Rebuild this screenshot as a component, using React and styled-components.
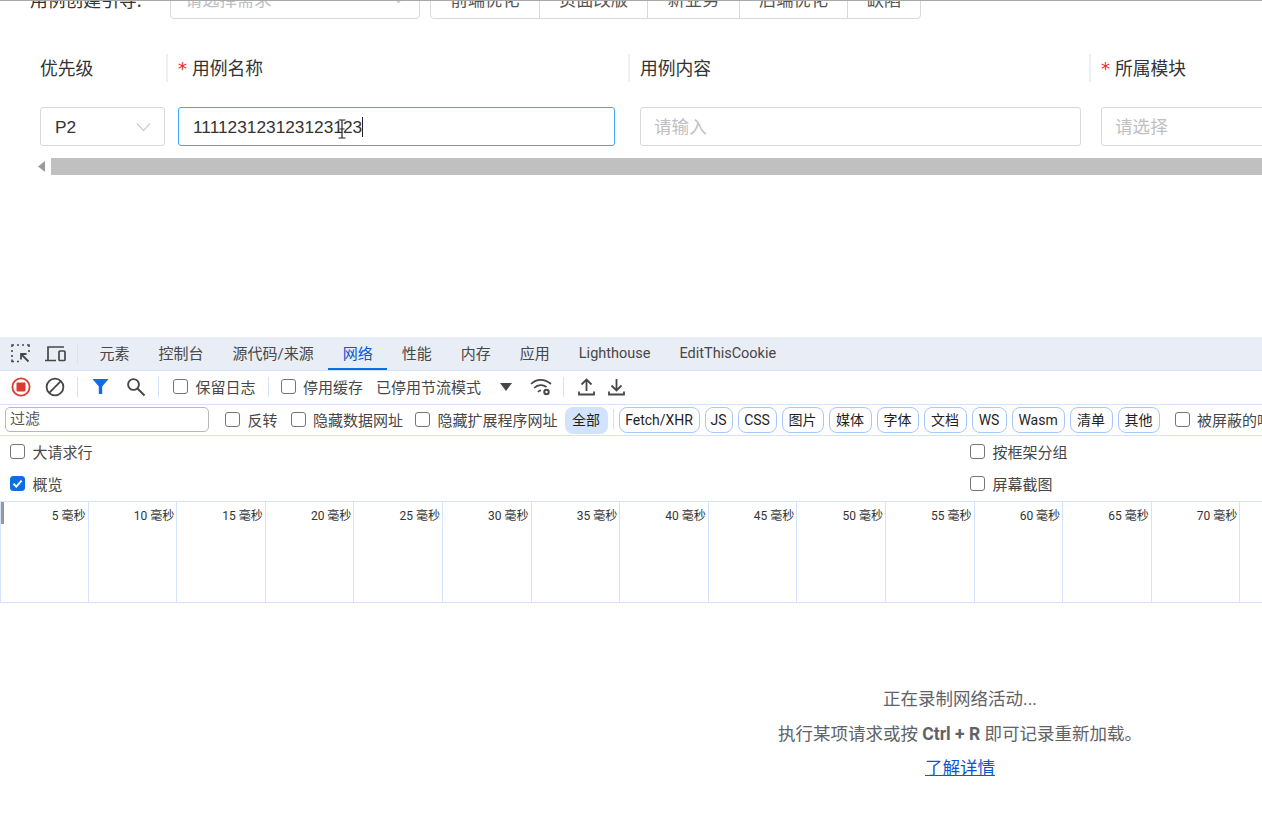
import React from "react";
import styled, { createGlobalStyle } from "styled-components";

const Global = createGlobalStyle`
  html, body { margin: 0; padding: 0; background: #fff; overflow: hidden; }
  body { font-family: Roboto, "Noto Sans CJK SC", sans-serif; white-space: nowrap; }
  * { box-sizing: border-box; }
`;

const Screen = styled.div`
  width: 1262px;
  height: 818px;
  overflow: hidden;
`;

/* ---------- page above the devtools ---------- */
const PageArea = styled.div`
  height: 337px;
  border-top: 1px solid #a9a9a9;
  overflow: hidden;
  font-family: "Noto Sans CJK SC", "Liberation Sans", sans-serif;
`;
const GuideRow = styled.div`
  display: flex;
  align-items: center;
  height: 40px;
  margin-top: -22px;
  padding-left: 30px;
  color: #333;
  font-size: 17.8px;
`;
const GuideLabel = styled.span`
  width: 140px;
`;
const GuideSelect = styled.div`
  width: 250px;
  height: 40px;
  border: 1px solid #d9d9d9;
  border-radius: 4px;
  padding-left: 14px;
  line-height: 38px;
  color: #bfbfbf;
  font-size: 17.3px;
  position: relative;
`;
const Segments = styled.div`
  display: flex;
  margin-left: 10px;
  height: 40px;
  border: 1px solid #d9d9d9;
  border-radius: 4px;
`;
const Segment = styled.div`
  width: ${(p) => p.$w}px;
  text-align: center;
  line-height: 38px;
  font-size: 17.3px;
  color: #555;
  & + & { border-left: 1px solid #d9d9d9; }
`;
const FormTable = styled.div`
  display: grid;
  grid-template-columns: 128px 462px 461px 400px;
  margin-top: 35px;
  padding-left: 40px;
  width: 1500px;
`;
const HeadCell = styled.div`
  height: 28px;
  line-height: 27px;
  font-size: 17.8px;
  color: #333;
  margin-left: ${(p) => (p.$first ? 0 : -2)}px;
  padding-left: ${(p) => (p.$first ? 0 : 10)}px;
  border-left: ${(p) => (p.$first ? "none" : "2px solid #efefef")};
`;
const Star = styled.span`
  color: #f5222d;
  margin-right: 5px;
  font-size: 18px;
  font-family: "DejaVu Sans", sans-serif;
`;
const BodyCell = styled.div`
  margin-top: 25px;
  padding-left: ${(p) => (p.$first ? 0 : 10)}px;
  padding-right: ${(p) => p.$right || 0}px;
`;
const Field = styled.div`
  position: relative;
  height: 39px;
  border: 1px solid ${(p) => (p.$focus ? "#40a9ff" : "#d9d9d9")};
  border-radius: 3px;
  padding-left: ${(p) => (p.$muted ? 13 : 14)}px;
  line-height: 39px;
  font-size: ${(p) => (p.$muted ? 17.6 : 17.3)}px;
  color: ${(p) => (p.$muted ? "#bfbfbf" : "#333")};
  font-family: "Liberation Sans", "Noto Sans CJK SC", sans-serif;
`;
const Caret = styled.span`
  display: inline-block;
  width: 1px;
  height: 20px;
  background: #222;
  vertical-align: -4px;
`;
const Chevron = styled.svg`
  position: absolute;
  right: 13px;
  top: 14px;
`;
const IBeam = styled.svg`
  position: absolute;
  left: 158px;
  top: 11px;
`;
const ScrollBar = styled.div`
  display: flex;
  align-items: center;
  margin-top: 12px;
  height: 17px;
  padding-left: 38px;
`;
const ScrollThumb = styled.div`
  flex: 1;
  height: 17px;
  margin-left: 6px;
  background: #c0c0c0;
`;

/* ---------- devtools ---------- */
const DevTools = styled.div`
  font-family: Roboto, "Noto Sans CJK SC", sans-serif;
  font-size: 15px;
  color: #474747;
`;
const TabBar = styled.div`
  display: flex;
  align-items: center;
  height: 34px;
  background: #e9edf5;
  border-bottom: 1px solid #d3e3fd;
  padding-left: 11px;
`;
const IconSlot = styled.span`
  display: inline-flex;
  align-items: center;
  justify-content: center;
  flex: none;
  width: ${(p) => p.$w}px;
  margin-left: ${(p) => p.$ml || 0}px;
  margin-right: ${(p) => p.$mr || 0}px;
`;
const VLine = styled.span`
  flex: none;
  width: 1px;
  height: 20px;
  background: #d3e3fd;
  margin-left: ${(p) => p.$ml || 0}px;
  margin-right: ${(p) => p.$mr || 0}px;
`;
const Tab = styled.div`
  position: relative;
  height: 33px;
  line-height: 34px;
  padding: 0 14.5px;
  font-size: ${(p) => (p.$latin ? 14.5 : 15)}px;
  color: ${(p) => (p.$active ? "#0b57d0" : "#474747")};
  ${(p) =>
    p.$active &&
    `&::after { content: ""; position: absolute; left: 0; right: 0; bottom: 0; height: 2px; background: #0b6fe0; }`}
`;
const ToolBar = styled.div`
  display: flex;
  align-items: center;
  height: 34px;
  border-bottom: 1px solid #d3e3fd;
  padding: 0 0 2px 10px;
`;
const Box = styled.span`
  flex: none;
  display: inline-flex;
  align-items: center;
  justify-content: center;
  width: 15px;
  height: 15px;
  border: 1.3px solid ${(p) => (p.$on ? "#0b6fe0" : "#757575")};
  background: ${(p) => (p.$on ? "#0b6fe0" : "#fff")};
  border-radius: 3px;
`;
const Check = styled.label`
  display: inline-flex;
  align-items: center;
  gap: 7.5px;
  margin-left: ${(p) => p.$ml || 0}px;
  color: #474747;
`;
const FilterBar = styled.div`
  display: flex;
  align-items: center;
  height: 31px;
  border-bottom: 1px solid #d3e3fd;
  padding: 0 0 2px 5px;
`;
const FilterInput = styled.div`
  flex: none;
  width: 204px;
  height: 25px;
  border: 1px solid #b8b8b8;
  border-radius: 5px;
  padding-left: 4px;
  line-height: 23px;
  color: #555;
`;
const AllChip = styled.div`
  flex: none;
  width: 43px;
  height: 27px;
  margin: 2px 0 0 7px;
  border-radius: 8px;
  background: #d3e3fd;
  color: #1f1f1f;
  text-align: center;
  line-height: 27px;
  font-size: 14px;
`;
const Chip = styled.div`
  flex: none;
  width: ${(p) => p.$w}px;
  height: 26px;
  margin: 2px 0 0 5px;
  border: 1px solid #a8c7fa;
  border-radius: 8px;
  color: #1f1f1f;
  text-align: center;
  line-height: 24px;
  font-size: 14px;
`;
const Options = styled.div`
  display: grid;
  grid-template-columns: 960px 1fr;
  grid-auto-rows: 32.5px;
  height: 66px;
  margin-top: -1px;
  padding-left: 10px;
  align-items: center;
  align-content: start;
`;
const Timeline = styled.div`
  display: flex;
  position: relative;
  height: 102px;
  border-top: 1px solid #d3e3fd;
  border-bottom: 1px solid #d3e3fd;
  border-left: 1px solid #d3e3fd;
  overflow: hidden;
`;
const Marker = styled.span`
  position: absolute;
  left: -1px;
  top: 0;
  width: 4px;
  height: 22px;
  background: #999;
`;
const Cell = styled.div`
  flex: 0 0 88.6px;
  border-right: 1px solid #d3e3fd;
  text-align: right;
  padding: 5px 2px 0 0;
  font-size: 12px;
  line-height: 18px;
  color: #333;
  &:nth-child(2) { margin-left: -1px; }
`;
const Message = styled.div`
  display: flex;
  flex-direction: column;
  align-items: center;
  padding: 79px 0 0 658px;
  width: 1262px;
  color: #5f6368;
  font-size: 17.5px;
  line-height: 34.7px;
`;
const Link = styled.a`
  color: #0b57d0;
  text-decoration: underline;
`;
const ThrottleLabel = styled.span`
  margin-left: 13px;
`;

const Cb = ({ children, on, ml }) => (
  <Check $ml={ml}>
    <Box $on={on}>
      {on && (
        <svg width="11" height="11" viewBox="0 0 11 11">
          <path d="M1.5 5.8 4.3 8.6 9.6 2.6" fill="none" stroke="#fff" strokeWidth="2" />
        </svg>
      )}
    </Box>
    {children}
  </Check>
);

const DownChevron = ({ color = "#bfbfbf" }) => (
  <Chevron width="15" height="10" viewBox="0 0 15 10">
    <path d="M1 1.5 7.5 8.5 14 1.5" fill="none" stroke={color} strokeWidth="1.1" />
  </Chevron>
);

const chips = [
  ["Fetch/XHR", 81], ["JS", 28], ["CSS", 39], ["图片", 42], ["媒体", 43], ["字体", 42],
  ["文档", 43], ["WS", 35], ["Wasm", 53], ["清单", 43], ["其他", 42],
];
const tabs = ["元素", "控制台", "源代码/来源", "网络", "性能", "内存", "应用", "Lighthouse", "EditThisCookie"];
const ticks = Array.from({ length: 15 }, (_, i) => (i + 1) * 5);

export default function App() {
  return (
    <Screen>
      <Global />
      <PageArea>
        <GuideRow>
          <GuideLabel>用例创建引导:</GuideLabel>
          <GuideSelect>请选择需求<DownChevron /></GuideSelect>
          <Segments>
            <Segment $w={108}>前端优化</Segment>
            <Segment $w={108}>页面改版</Segment>
            <Segment $w={92}>新业务</Segment>
            <Segment $w={108}>后端优化</Segment>
            <Segment $w={73}>缺陷</Segment>
          </Segments>
        </GuideRow>
        <FormTable>
          <HeadCell $first>优先级</HeadCell>
          <HeadCell><Star>*</Star>用例名称</HeadCell>
          <HeadCell>用例内容</HeadCell>
          <HeadCell><Star>*</Star>所属模块</HeadCell>
          <BodyCell $first $right={3}>
            <Field>P2<DownChevron /></Field>
          </BodyCell>
          <BodyCell $right={15}>
            <Field $focus>
              111123123123123123<Caret />
              <IBeam width="10" height="20" viewBox="0 0 10 20">
                <path d="M1.5 1H8.5M5 1V19M1.5 19H8.5M2.5 10H7.5" fill="none" stroke="#222" strokeWidth="1.2" />
              </IBeam>
            </Field>
          </BodyCell>
          <BodyCell $right={10}>
            <Field $muted>请输入</Field>
          </BodyCell>
          <BodyCell $right={10}>
            <Field $muted>请选择</Field>
          </BodyCell>
        </FormTable>
        <ScrollBar>
          <svg width="7" height="11" viewBox="0 0 7 11">
            <path d="M7 0V11L0 5.5Z" fill="#9a9a9a" />
          </svg>
          <ScrollThumb />
        </ScrollBar>
      </PageArea>

      <DevTools>
        <TabBar>
          <IconSlot $w={20}>
            <svg width="20" height="19" viewBox="0 0 20 19" fill="none" stroke="#474747">
              <path d="M1 3V1H3M6 1H8M11 1H13M16 1H18V3M1 6V8M1 11V13M1 15.5V17.5H3M6 17.5H8" strokeWidth="1.6" />
              <path d="M18 6V8" strokeWidth="1.6" />
              <path d="M17.5 17.5 10 10M10 15.5V10H15.5" strokeWidth="1.8" />
            </svg>
          </IconSlot>
          <IconSlot $w={22} $ml={13}>
            <svg width="22" height="17" viewBox="0 0 22 17" fill="none" stroke="#474747" strokeWidth="1.7">
              <path d="M1 15.5H12M4 15V2H20" />
              <rect x="15" y="6" width="6" height="9.5" rx="1" />
            </svg>
          </IconSlot>
          <VLine $ml={11} $mr={7} />
          {tabs.map((t, i) => (
            <Tab key={t} $active={t === "网络"} $latin={i > 6}>{t}</Tab>
          ))}
        </TabBar>

        <ToolBar>
          <IconSlot $w={21}>
            <svg width="20" height="20" viewBox="0 0 20 20">
              <circle cx="10" cy="10" r="8.6" fill="none" stroke="#dc3a2e" strokeWidth="1.8" />
              <rect x="5.5" y="5.5" width="9" height="9" rx="1" fill="#dc3a2e" />
            </svg>
          </IconSlot>
          <IconSlot $w={20} $ml={14}>
            <svg width="20" height="20" viewBox="0 0 20 20" fill="none" stroke="#474747" strokeWidth="1.8">
              <circle cx="10" cy="10" r="8.4" />
              <path d="M4.2 15.8 15.8 4.2" />
            </svg>
          </IconSlot>
          <VLine $ml={12} />
          <IconSlot $w={17} $ml={14}>
            <svg width="17" height="17" viewBox="0 0 17 17">
              <path d="M0.5 1H16.5L10.2 8.6V16H6.8V8.6Z" fill="#0b6fe0" />
            </svg>
          </IconSlot>
          <IconSlot $w={20} $ml={17}>
            <svg width="20" height="20" viewBox="0 0 20 20" fill="none" stroke="#474747" strokeWidth="1.9">
              <circle cx="7.5" cy="7.5" r="5.4" />
              <path d="M11.5 11.5 18.5 18.5" />
            </svg>
          </IconSlot>
          <VLine $ml={12} />
          <Cb ml={14}>保留日志</Cb>
          <VLine $ml={12} />
          <Cb ml={12}>停用缓存</Cb>
          <ThrottleLabel>已停用节流模式</ThrottleLabel>
          <IconSlot $w={12} $ml={19}>
            <svg width="12" height="8" viewBox="0 0 12 8"><path d="M0 0H12L6 8Z" fill="#474747" /></svg>
          </IconSlot>
          <IconSlot $w={22} $ml={18}>
            <svg width="22" height="18" viewBox="0 0 22 18" fill="none" stroke="#474747" strokeWidth="1.7">
              <path d="M1 6C6.5 0.6 14.5 0.6 21 6M4.2 10C8 6.4 13 6.4 16.5 9M8 14C9 12.8 10 12.4 11 12.4" />
              <circle cx="16.5" cy="14" r="2.2" strokeWidth="2" />
            </svg>
          </IconSlot>
          <VLine $ml={11} />
          <IconSlot $w={17} $ml={14}>
            <svg width="17" height="18" viewBox="0 0 17 18" fill="none" stroke="#474747" strokeWidth="1.8">
              <path d="M8.5 13V2M3.5 6.5 8.5 1.5 13.5 6.5M1 13.5V16.5H16V13.5" />
            </svg>
          </IconSlot>
          <IconSlot $w={17} $ml={13}>
            <svg width="17" height="18" viewBox="0 0 17 18" fill="none" stroke="#474747" strokeWidth="1.8">
              <path d="M8.5 1V12M3.5 7.5 8.5 12.5 13.5 7.5M1 13.5V16.5H16V13.5" />
            </svg>
          </IconSlot>
        </ToolBar>

        <FilterBar>
          <FilterInput>过滤</FilterInput>
          <Cb ml={16}>反转</Cb>
          <Cb ml={13}>隐藏数据网址</Cb>
          <Cb ml={12}>隐藏扩展程序网址</Cb>
          <AllChip>全部</AllChip>
          <VLine $ml={5} />
          {chips.map(([label, w]) => (
            <Chip key={label} $w={w}>{label}</Chip>
          ))}
          <Cb ml={15}>被屏蔽的响应 Cookie</Cb>
        </FilterBar>

        <Options>
          <Cb>大请求行</Cb>
          <Cb>按框架分组</Cb>
          <Cb on>概览</Cb>
          <Cb>屏幕截图</Cb>
        </Options>

        <Timeline>
          <Marker />
          {ticks.map((n) => (
            <Cell key={n}>{n} 毫秒</Cell>
          ))}
        </Timeline>

        <Message>
          <span>正在录制网络活动...</span>
          <span>执行某项请求或按 <b>Ctrl + R</b> 即可记录重新加载。</span>
          <Link>了解详情</Link>
        </Message>
      </DevTools>
    </Screen>
  );
}
